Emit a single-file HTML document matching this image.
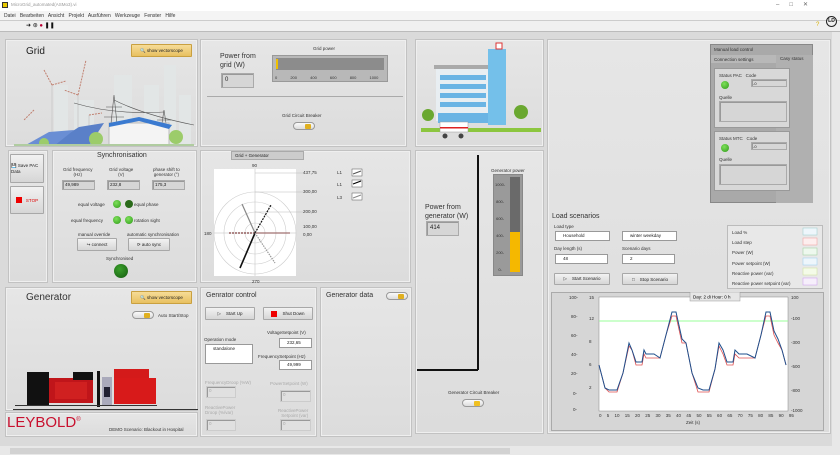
<!DOCTYPE html>
<html><head><meta charset="utf-8">
<style>
*{margin:0;padding:0;box-sizing:border-box}
body{width:840px;height:455px;overflow:hidden;background:#dadada;font-family:"Liberation Sans",sans-serif;position:relative;color:#222}
.a{position:absolute}
.p{position:absolute;background:linear-gradient(#e6e6e6,#dcdcdc);border:1px solid #c2c2c2;box-shadow:inset 0 0 0 1px #efefef}
.t{position:absolute;font-size:4.5px;color:#333;white-space:nowrap}
.btn{position:absolute;background:linear-gradient(#f2f2f2,#d6d6d6);border:1px solid #a8a8a8;border-radius:1px;font-size:4.5px;display:flex;align-items:center;justify-content:center}
.ind{position:absolute;background:#d6d6d6;border:1px solid #aaa;box-shadow:inset 1px 1px 0 #999;font-size:4.5px;padding:1px 2px}
.ctl{position:absolute;background:#fff;border:1px solid #999;font-size:4.5px;padding:1px 2px 1px 7px}
.led{position:absolute;border-radius:50%;background:radial-gradient(circle at 40% 35%,#7ee05a,#2f9a1a);}
.sw{position:absolute;width:22px;height:8px;border-radius:4px;border:1px solid #999;background:linear-gradient(#fafafa,#ddd)}
.sw i{position:absolute;right:3px;top:1px;width:6px;height:5px;background:#e0b020;border-radius:1px}
</style></head><body>
<div class="a" style="left:0;top:0;width:840px;height:11px;background:#fff"></div>
<div class="a" style="left:2px;top:2px;width:6px;height:6px;background:#e8c800;border:1px solid #333"></div>
<div class="t" style="left:11px;top:2px;color:#999">MicroGrid_automated(ASMo3).vi</div>
<div class="t" style="left:776px;top:1px;font-size:6px;color:#666">–&nbsp;&nbsp;&nbsp;&nbsp;&nbsp;&nbsp;□&nbsp;&nbsp;&nbsp;&nbsp;&nbsp;&nbsp;✕</div>
<div class="a" style="left:0;top:11px;width:840px;height:10px;background:#f4f4f4;border-bottom:1px solid #ccc"></div>
<div class="t" style="left:4px;top:13px;font-size:5px">Datei&nbsp;&nbsp; Bearbeiten&nbsp;&nbsp; Ansicht&nbsp;&nbsp; Projekt&nbsp;&nbsp; Ausführen&nbsp;&nbsp; Werkzeuge&nbsp;&nbsp; Fenster&nbsp;&nbsp; Hilfe</div>
<div class="a" style="left:0;top:21px;width:840px;height:11px;background:#f0f0f0;border-bottom:1px solid #bbb"></div>
<div class="t" style="left:26px;top:22px;font-size:6px;color:#111">➜ ⊛ <span style="color:#b03">●</span> ❚❚</div>
<div class="t" style="left:816px;top:22px;font-size:6px;color:#d8b000">?</div>
<div class="a" style="left:826px;top:16px;width:11px;height:11px;border:1.5px solid #222;border-radius:50%;font-size:5px;text-align:center;line-height:8px;font-weight:bold">LD</div>

<div class="p" style="left:5px;top:39px;width:193px;height:108px"></div>
<div class="t" style="left:26px;top:46px;font-size:10px;color:#222">Grid</div>
<div class="btn" style="left:131px;top:44px;width:61px;height:13px;background:linear-gradient(#f6dc98,#e8c060);border-color:#c9a040">🔍 show vectorscope</div>
<svg class="a" style="left:14px;top:55px" width="180" height="91">
<g fill="#e2e6e6"><rect x="40" y="30" width="14" height="61"/><rect x="100" y="20" width="18" height="71"/><rect x="130" y="30" width="15" height="61"/><rect x="150" y="10" width="12" height="81"/><rect x="165" y="40" width="12" height="51"/><rect x="60" y="45" width="20" height="46"/></g>
<g stroke="#ccc" stroke-width="1"><line x1="38" y1="30" x2="38" y2="90"/><line x1="64" y1="40" x2="64" y2="90"/><line x1="75" y1="60" x2="75" y2="90"/></g>
<g stroke="#c08070" stroke-width="1" stroke-dasharray="2 1"><line x1="38" y1="30" x2="30" y2="15"/><line x1="38" y1="30" x2="52" y2="26"/><line x1="64" y1="40" x2="72" y2="5"/><line x1="64" y1="40" x2="50" y2="35"/><line x1="20" y1="55" x2="10" y2="65"/><line x1="75" y1="60" x2="88" y2="58"/></g>
<g stroke="#555" stroke-width="0.6" fill="none"><path d="M100 40 L95 88 M100 40 L105 88 M92 52 L108 52 M90 62 L110 62 M96 70 L104 80"/><path d="M150 55 L145 88 M150 55 L155 88 M143 65 L157 65"/><path d="M60 48 Q100 60 150 57 M100 45 Q130 60 180 70"/></g>
<path d="M35 91 L65 72 L90 68 L75 91 Z" fill="#5a80c8"/><path d="M10 91 L35 77 L60 75 L40 91 Z" fill="#6a8ed4"/>
<rect x="95" y="68" width="60" height="23" fill="#f4f4f4" stroke="#bbb"/><path d="M95 68 L125 62 L158 70 L155 74 L125 66 L95 72 Z" fill="#3a7ad0"/>
<g fill="#9ccc6a"><circle cx="82" cy="84" r="7"/><circle cx="162" cy="82" r="7"/><circle cx="30" cy="88" r="5"/></g>
<rect x="0" y="89" width="180" height="2" fill="#b0cca0"/>
</svg>

<div class="p" style="left:200px;top:39px;width:207px;height:108px"></div>
<div class="t" style="left:220px;top:52px;font-size:7px;line-height:9px;white-space:normal;width:45px">Power from grid (W)</div>
<div class="ind" style="left:221px;top:73px;width:33px;height:15px;font-size:6px;padding:3px">0</div>
<div class="t" style="left:313px;top:46px">Grid power</div>
<div class="a" style="left:272px;top:55px;width:116px;height:27px;background:#b8b8b8;border:1px solid #999"></div>
<div class="a" style="left:276px;top:58px;width:108px;height:12px;background:#8c8c8c"></div>
<div class="a" style="left:276px;top:59px;width:2px;height:10px;background:#f0c000"></div>
<div class="t" style="left:275px;top:75px;font-size:4px;word-spacing:12px">0 200 400 600 800 1000</div>
<div class="a" style="left:207px;top:96px;width:196px;height:1px;background:#aaa"></div>
<div class="t" style="left:282px;top:113px">Grid Circuit Breaker</div>
<div class="sw" style="left:293px;top:122px"><i></i></div>

<div class="p" style="left:415px;top:39px;width:129px;height:108px"></div>
<svg class="a" style="left:416px;top:40px" width="127" height="106">
<rect x="20" y="26" width="55" height="55" fill="#e8eef2"/><rect x="18" y="25" width="58" height="4" fill="#aaa"/>
<g fill="#6ab4e4"><rect x="24" y="35" width="46" height="5"/><rect x="24" y="44" width="46" height="5"/><rect x="24" y="53" width="46" height="5"/><rect x="24" y="62" width="46" height="5"/><rect x="22" y="73" width="50" height="10"/></g>
<rect x="72" y="9" width="18" height="76" fill="#74c0ea"/><rect x="80" y="3" width="6" height="6" fill="#fff" stroke="#d33"/>
<rect x="5" y="88" width="120" height="4" fill="#8cc63f"/>
<circle cx="12" cy="75" r="6" fill="#6aa830"/><circle cx="105" cy="72" r="7" fill="#6aa830"/>
<rect x="24" y="82" width="28" height="10" fill="#fff" stroke="#999" stroke-width=".5"/><rect x="24" y="87" width="28" height="1.5" fill="#d22"/>
<circle cx="29" cy="96" r="2.5" fill="#444"/><circle cx="45" cy="96" r="2.5" fill="#444"/>
</svg>

<div class="p" style="left:547px;top:39px;width:284px;height:395px"></div>
<div class="a" style="left:710px;top:44px;width:103px;height:159px;background:#a9a9a9;border:1px solid #888"></div>
<div class="t" style="left:714px;top:47px">Manual load control</div>
<div class="a" style="left:711px;top:55px;width:65px;height:8px;background:#b8b8b8"></div>
<div class="t" style="left:714px;top:57px">Connection settings</div>
<div class="a" style="left:776px;top:55px;width:37px;height:148px;background:#b0b0b0"></div>
<div class="t" style="left:780px;top:56px">Casy status</div>
<div class="a" style="left:714px;top:68px;width:76px;height:60px;background:#d8d8d8;border:1px solid #999"></div>
<div class="t" style="left:719px;top:73px">Status PAC&nbsp;&nbsp; Code</div>
<div class="ind" style="left:751px;top:79px;width:36px;height:8px;font-size:4px;padding:1px">-0</div>
<div class="led" style="left:721px;top:81px;width:8px;height:8px"></div>
<div class="t" style="left:719px;top:95px">Quelle</div>
<div class="ind" style="left:719px;top:101px;width:68px;height:21px"></div>
<div class="a" style="left:714px;top:131px;width:76px;height:60px;background:#d8d8d8;border:1px solid #999"></div>
<div class="t" style="left:719px;top:136px">Status MTC&nbsp;&nbsp; Code</div>
<div class="ind" style="left:751px;top:142px;width:36px;height:8px;font-size:4px;padding:1px">-0</div>
<div class="led" style="left:721px;top:144px;width:8px;height:8px"></div>
<div class="t" style="left:719px;top:157px">Quelle</div>
<div class="ind" style="left:719px;top:164px;width:68px;height:21px"></div>

<div class="t" style="left:552px;top:213px;font-size:7px">Load scenarios</div>
<div class="t" style="left:554px;top:224px">Load type</div>
<div class="ctl" style="left:555px;top:231px;width:55px;height:10px">Household</div>
<div class="ctl" style="left:622px;top:231px;width:55px;height:10px">winter weekday</div>
<div class="t" style="left:554px;top:246px">Day length (s)</div>
<div class="t" style="left:622px;top:246px">Scenario days</div>
<div class="ctl" style="left:555px;top:254px;width:53px;height:10px">48</div>
<div class="ctl" style="left:622px;top:254px;width:53px;height:10px">2</div>
<div class="btn" style="left:554px;top:273px;width:56px;height:12px">▷&nbsp;&nbsp;&nbsp; Start Scenario</div>
<div class="btn" style="left:622px;top:273px;width:56px;height:12px">□&nbsp;&nbsp;&nbsp; Stop Scenario</div>
<div class="a" style="left:727px;top:225px;width:96px;height:64px;background:#e8e8e8;border:1px solid #bbb"></div>
<div class="t" style="left:732px;top:228px;line-height:10.2px">Load %<br>Load step<br>Power (W)<br>Power setpoint (W)<br>Reactive power (var)<br>Reactive power setpoint (var)</div>
<svg class="a" style="left:800px;top:227px" width="20" height="60">
<g stroke-width=".5"><rect x="3" y="1" width="14" height="7" fill="#eef6fb" stroke="#9cc"/><rect x="3" y="11" width="14" height="7" fill="#fdeeee" stroke="#e99"/><rect x="3" y="21" width="14" height="7" fill="#eef8ee" stroke="#9c9"/><rect x="3" y="31" width="14" height="7" fill="#eef6fb" stroke="#9ce"/><rect x="3" y="41" width="14" height="7" fill="#f4fbe8" stroke="#cd9"/><rect x="3" y="51" width="14" height="7" fill="#f6effb" stroke="#c9e"/></g>
</svg>
<div class="a" style="left:551px;top:292px;width:273px;height:139px;background:#d6d6d6;border:1px solid #aaa"></div>
<svg class="a" style="left:551px;top:292px" width="273" height="139">
<rect x="48" y="5" width="189" height="114" fill="#fff" stroke="#888" stroke-width=".5"/>
<line x1="48" y1="29" x2="237" y2="29" stroke="#9f9" stroke-width="1"/>
<polyline transform="translate(-551,-292)" fill="none" stroke="#e05050" stroke-width=".8" points="599,365 605,388 609,392 617,392 623,373 629,346 632,350 636,365 642,365 644,354 646,358 654,358 660,358 666,335 672,316 676,316 682,343 686,343 692,373 698,392 703,392 709,392 715,369 719,346 723,354 727,365 733,365 735,354 739,358 747,358 755,358 761,335 766,316 770,316 774,335 778,343 782,350 786,365"/>
<polyline transform="translate(-551,-292)" fill="none" stroke="#1e4f8c" stroke-width="1" points="599,365 605,388 609,390 617,390 623,373 629,343 632,350 636,362 642,362 644,350 646,354 654,354 660,358 666,335 672,312 676,312 682,339 686,343 692,373 698,388 703,390 709,390 715,369 719,343 723,350 727,362 733,362 735,350 739,354 747,354 755,358 761,335 766,312 770,312 774,331 778,339 782,350 786,365"/>
<rect x="139" y="0" width="50" height="9" fill="#e6e6e6" stroke="#999" stroke-width=".5"/>
<text x="142" y="6.5" font-size="4.5" font-family="Liberation Sans">Day: 2 di Hour: 0 h</text>
<g font-size="4.5" font-family="Liberation Sans" fill="#333">
<text x="18" y="7">100-</text><text x="20" y="26">80-</text><text x="20" y="45">60-</text><text x="20" y="64">40-</text><text x="20" y="83">20-</text><text x="22" y="103">0-</text><text x="22" y="119">0-</text>
<text x="38" y="7">15</text><text x="38" y="28">12</text><text x="38" y="51">8</text><text x="38" y="74">6</text><text x="38" y="97">2</text>
<text x="240" y="7">100</text><text x="240" y="28">-100</text><text x="240" y="52">-300</text><text x="240" y="76">-500</text><text x="240" y="100">-800</text><text x="240" y="120">-1000</text>
<text x="48" y="125" word-spacing="4">0 5 10 15 20 25 30 35 40 45 50 55 60 65 70 75 80 85 90 95</text>
<text x="135" y="132">Zeit (s)</text>
</g>
</svg>

<div class="p" style="left:8px;top:150px;width:40px;height:133px"></div>
<div class="btn" style="left:10px;top:154px;width:34px;height:29px">💾 Save PAC Data</div>
<div class="btn" style="left:10px;top:186px;width:34px;height:28px;color:#d00"><span style="display:inline-block;width:6px;height:6px;background:#e00;margin-right:4px"></span>STOP</div>

<div class="p" style="left:52px;top:150px;width:145px;height:133px"></div>
<div class="t" style="left:97px;top:152px;font-size:7px">Synchronisation</div>
<div class="t" style="left:63px;top:167px;text-align:center">Grid frequency<br>(Hz)</div>
<div class="t" style="left:109px;top:167px;text-align:center">Grid voltage<br>(V)</div>
<div class="t" style="left:153px;top:167px;text-align:center">phase shift to<br>generator (°)</div>
<div class="ind" style="left:62px;top:180px;width:33px;height:10px">49,989</div>
<div class="ind" style="left:107px;top:180px;width:33px;height:10px">232,8</div>
<div class="ind" style="left:152px;top:180px;width:33px;height:10px">175,3</div>
<div class="t" style="left:78px;top:202px">equal voltage</div>
<div class="led" style="left:113px;top:200px;width:8px;height:8px"></div>
<div class="led" style="left:125px;top:200px;width:8px;height:8px;background:#2a6a1a"></div>
<div class="t" style="left:134px;top:202px">equal phase</div>
<div class="t" style="left:71px;top:218px">equal frequency</div>
<div class="led" style="left:113px;top:216px;width:8px;height:8px"></div>
<div class="led" style="left:125px;top:216px;width:8px;height:8px"></div>
<div class="t" style="left:134px;top:218px">rotation sight</div>
<div class="t" style="left:78px;top:232px">manual override</div>
<div class="t" style="left:127px;top:232px">automatic synchronisation</div>
<div class="btn" style="left:77px;top:238px;width:40px;height:13px">↪ connect</div>
<div class="btn" style="left:128px;top:238px;width:42px;height:13px">⟳ auto sync</div>
<div class="t" style="left:106px;top:256px">Synchronised</div>
<div class="led" style="left:114px;top:264px;width:14px;height:14px;background:radial-gradient(circle at 40% 35%,#3aa02a,#145a10)"></div>

<div class="p" style="left:200px;top:150px;width:211px;height:133px"></div>
<div class="a" style="left:231px;top:151px;width:73px;height:9px;background:#ccc;border:1px solid #aaa;font-size:4.5px;padding:1px 3px">Grid + Generator</div>
<svg class="a" style="left:200px;top:160px" width="200" height="125">
<rect x="14" y="9" width="82" height="107" fill="#fff"/>
<g fill="none" stroke="#ccc" stroke-width=".6"><circle cx="55" cy="73" r="41"/><circle cx="55" cy="73" r="31"/><circle cx="55" cy="73" r="21"/><circle cx="55" cy="73" r="10"/></g>
<g stroke="#bbb" stroke-width=".5"><line x1="55" y1="9" x2="55" y2="116"/><line x1="14" y1="73" x2="96" y2="73"/><line x1="55" y1="13" x2="103" y2="13"/><line x1="55" y1="32" x2="103" y2="32"/><line x1="55" y1="52" x2="103" y2="52"/></g>
<g stroke-width="1.2" fill="none"><line x1="55" y1="73" x2="42" y2="44" stroke="#888"/><line x1="55" y1="73" x2="90" y2="73" stroke="#a07070"/><line x1="55" y1="73" x2="28" y2="73" stroke="#804040" stroke-dasharray="2 1"/><line x1="55" y1="73" x2="71" y2="45" stroke="#111" stroke-dasharray="2 1"/><line x1="55" y1="73" x2="40" y2="108" stroke="#111" stroke-width="1.6"/><line x1="55" y1="73" x2="75" y2="103" stroke="#999" stroke-dasharray="1.5 1"/></g>
<g font-size="4.5" font-family="Liberation Sans" fill="#333"><text x="52" y="7">90</text><text x="52" y="123">270</text><text x="4" y="75">180</text><text x="103" y="14">437,75</text><text x="103" y="33">300,00</text><text x="103" y="53">200,00</text><text x="103" y="68">100,00</text><text x="103" y="76">0,00</text>
<text x="137" y="14">L1</text><text x="137" y="26">L1</text><text x="137" y="39">L3</text></g>
<g stroke="#555" stroke-width=".5" fill="#fff"><rect x="152" y="9" width="10" height="7"/><rect x="152" y="20" width="10" height="7"/><rect x="152" y="33" width="10" height="7"/></g>
<line x1="153" y1="24" x2="161" y2="21" stroke="#000" stroke-width="1.2"/><line x1="153" y1="14" x2="161" y2="11" stroke="#555"/><line x1="153" y1="38" x2="161" y2="35" stroke="#888"/>
</svg>

<div class="p" style="left:415px;top:150px;width:129px;height:284px"></div>
<div class="t" style="left:425px;top:203px;font-size:7px;line-height:9px;white-space:normal;width:55px">Power from generator (W)</div>
<div class="ind" style="left:426px;top:221px;width:33px;height:15px;font-size:6px;padding:3px">414</div>
<div class="t" style="left:491px;top:168px">Generator power</div>
<div class="a" style="left:493px;top:174px;width:30px;height:102px;background:#9a9a9a;border:1px solid #888"></div>
<div class="a" style="left:510px;top:177px;width:10px;height:95px;background:#6a6a6a"></div>
<div class="a" style="left:510px;top:232px;width:10px;height:40px;background:#f5b800"></div>
<div class="t" style="left:495px;top:176px;font-size:4px;line-height:17px">1000-<br>&nbsp;800-<br>&nbsp;600-<br>&nbsp;400-<br>&nbsp;200-<br>&nbsp;&nbsp;&nbsp;0-</div>
<div class="a" style="left:477px;top:155px;width:1.5px;height:215px;background:#111"></div>
<div class="a" style="left:417px;top:369px;width:61px;height:1.5px;background:#111"></div>
<div class="t" style="left:448px;top:390px">Generator Circuit Breaker</div>
<div class="sw" style="left:462px;top:399px"><i style="background:#f0c020"></i></div>

<div class="p" style="left:5px;top:287px;width:193px;height:124px"></div>
<div class="t" style="left:26px;top:292px;font-size:10px">Generator</div>
<div class="btn" style="left:131px;top:291px;width:61px;height:13px;background:linear-gradient(#f6dc98,#e8c060);border-color:#c9a040">🔍 show vectorscope</div>
<div class="sw" style="left:132px;top:311px"><i></i></div>
<div class="t" style="left:158px;top:313px">Auto Start/Stop</div>
<svg class="a" style="left:5px;top:350px" width="193" height="60">
<rect x="22" y="22" width="22" height="34" fill="#111"/><rect x="44" y="28" width="44" height="25" fill="#c0151a"/><rect x="50" y="32" width="32" height="17" fill="#d02020"/>
<rect x="68" y="22" width="20" height="8" fill="#111"/><rect x="92" y="21" width="3" height="36" fill="#111"/>
<rect x="97" y="27" width="10" height="28" fill="#aab"/><rect x="99" y="37" width="6" height="10" fill="#223"/>
<rect x="109" y="19" width="35" height="10" fill="#d41a1a"/><rect x="109" y="28" width="42" height="26" fill="#d81a1a"/>
<rect x="10" y="55" width="142" height="1" fill="#333"/>
<rect x="8" y="59" width="185" height="2" fill="#333"/>
</svg>
<div class="p" style="left:5px;top:412px;width:193px;height:25px"></div>
<div class="t" style="left:7px;top:414px;font-size:15px;color:#c8102e">LEYBOLD<sup style="font-size:6px">®</sup></div>
<div class="t" style="left:109px;top:427px">DEMO Scenario: Blackout in Hospital</div>

<div class="p" style="left:200px;top:287px;width:117px;height:150px"></div>
<div class="t" style="left:206px;top:292px;font-size:7px">Genrator control</div>
<div class="btn" style="left:205px;top:307px;width:50px;height:13px">▷&nbsp;&nbsp;&nbsp; Start Up</div>
<div class="btn" style="left:263px;top:307px;width:50px;height:13px"><span style="display:inline-block;width:6px;height:6px;background:#e00;margin-right:5px"></span>Shut Down</div>
<div class="t" style="left:267px;top:330px">VoltageSetpoint (V)</div>
<div class="t" style="left:204px;top:337px">Operation mode</div>
<div class="ctl" style="left:205px;top:344px;width:48px;height:20px">standalone</div>
<div class="ctl" style="left:279px;top:338px;width:33px;height:10px">232,65</div>
<div class="t" style="left:258px;top:354px">FrequencySetpoint (Hz)</div>
<div class="ctl" style="left:279px;top:360px;width:33px;height:10px">49,999</div>
<div class="t" style="left:205px;top:380px;color:#aaa">FrequencyDroop (%W)</div>
<div class="t" style="left:270px;top:381px;color:#aaa">PowerSetpoint (W)</div>
<div class="ind" style="left:206px;top:386px;width:30px;height:12px;background:#e0e0e0;border-color:#ccc;color:#aaa">0</div>
<div class="ind" style="left:280px;top:390px;width:31px;height:12px;background:#e0e0e0;border-color:#ccc;color:#aaa">0</div>
<div class="t" style="left:205px;top:405px;color:#aaa">ReactivePower<br>Droop (%/var)</div>
<div class="t" style="left:278px;top:408px;color:#aaa;text-align:right">ReactivePower<br>Setpoint (var)</div>
<div class="ind" style="left:206px;top:419px;width:30px;height:12px;background:#e0e0e0;border-color:#ccc;color:#aaa">0</div>
<div class="ind" style="left:280px;top:419px;width:31px;height:12px;background:#e0e0e0;border-color:#ccc;color:#aaa">0</div>

<div class="p" style="left:320px;top:287px;width:92px;height:150px"></div>
<div class="t" style="left:326px;top:292px;font-size:7px">Generator data</div>
<div class="sw" style="left:386px;top:292px"><i></i></div>

<div class="a" style="left:0;top:446px;width:840px;height:9px;background:#e8e8e8"></div>
<div class="a" style="left:10px;top:448px;width:500px;height:6px;background:#d2d2d2"></div>
<div class="a" style="left:832px;top:32px;width:8px;height:414px;background:#e8e8e8"></div>
</body></html>
